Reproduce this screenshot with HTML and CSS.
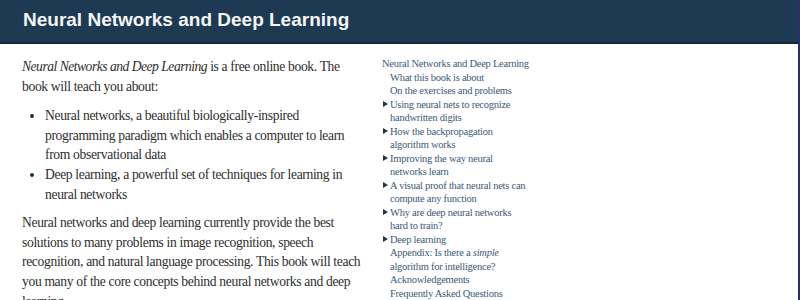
FILE: index.html
```html
<!DOCTYPE html>
<html>
<head>
<meta charset="utf-8">
<link rel="stylesheet" href="styles.css">
</head>
<body>
<div class="frame">
  <header class="header"><h1 class="title">Neural Networks and Deep Learning</h1></header>
  <div class="content">
    <main class="main">
      <p class="para"><em>Neural Networks and Deep Learning</em> is a free online book. The<br>book will teach you about:</p>
      <ul class="bullets">
        <li>Neural networks, a beautiful biologically-inspired<br>programming paradigm which enables a computer to learn<br>from observational data</li>
        <li>Deep learning, a powerful set of techniques for learning in<br>neural networks</li>
      </ul>
      <p class="para">Neural networks and deep learning currently provide the best<br>solutions to many problems in image recognition, speech<br>recognition, and natural language processing. This book will teach<br>you many of the core concepts behind neural networks and deep<br>learning.</p>
    </main>
    <nav class="toc">
      <div class="toc-top">Neural Networks and Deep Learning</div>
      <div class="toc-item">What this book is about</div>
      <div class="toc-item">On the exercises and problems</div>
      <div class="toc-item arrow">Using neural nets to recognize<br>handwritten digits</div>
      <div class="toc-item arrow">How the backpropagation<br>algorithm works</div>
      <div class="toc-item arrow">Improving the way neural<br>networks learn</div>
      <div class="toc-item arrow">A visual proof that neural nets can<br>compute any function</div>
      <div class="toc-item arrow">Why are deep neural networks<br>hard to train?</div>
      <div class="toc-item arrow">Deep learning</div>
      <div class="toc-item">Appendix: Is there a <em>simple</em><br>algorithm for intelligence?</div>
      <div class="toc-item">Acknowledgements</div>
      <div class="toc-item">Frequently Asked Questions</div>
    </nav>
  </div>
</div>
</body>
</html>
```
FILE: styles.css
```css
html, body { margin: 0; padding: 0; background: #fff; }
body { overflow: hidden; height: 300px; }
.frame { height: 300px; border-right: 2px solid #2b2f6e; box-sizing: border-box; overflow: hidden; }
.header {
  background: #1e3a52;
  height: 42px;
  border-bottom: 2px solid #16283a;
  padding-left: 23px;
  display: flex;
  align-items: center;
}
.title {
  margin: 0;
  font-family: "Liberation Sans", Arial, sans-serif;
  font-weight: bold;
  font-size: 19px;
  color: #f4f6f8;
  padding-bottom: 2px;
}
.content { display: flex; padding-left: 22px; padding-top: 13px; }
.main {
  width: 345px;
  flex: none;
  white-space: nowrap;
  font-family: "Liberation Serif", "Times New Roman", serif;
  font-size: 13.6px;
  letter-spacing: -0.35px;
  line-height: 19.6px;
  color: #2e2e2e;
}
.main em { letter-spacing: -0.5px; }
.para { margin: 0 0 10px 0; }
.bullets { margin: 0 0 9px 0; padding-left: 23px; }
.bullets li { margin: 0; padding-left: 0; }
.toc {
  margin-left: 15px;
  margin-top: 0;
  white-space: nowrap;
  font-family: "Liberation Serif", "Times New Roman", serif;
  font-size: 10.5px;
  letter-spacing: -0.25px;
  line-height: 13.5px;
  color: #3b5a78;
}
.toc-item { padding-left: 8px; position: relative; }
.toc-item.arrow::before {
  content: "";
  position: absolute;
  left: 1px;
  top: 3px;
  border-left: 5px solid #243447;
  border-top: 3.5px solid transparent;
  border-bottom: 3.5px solid transparent;
}
```
